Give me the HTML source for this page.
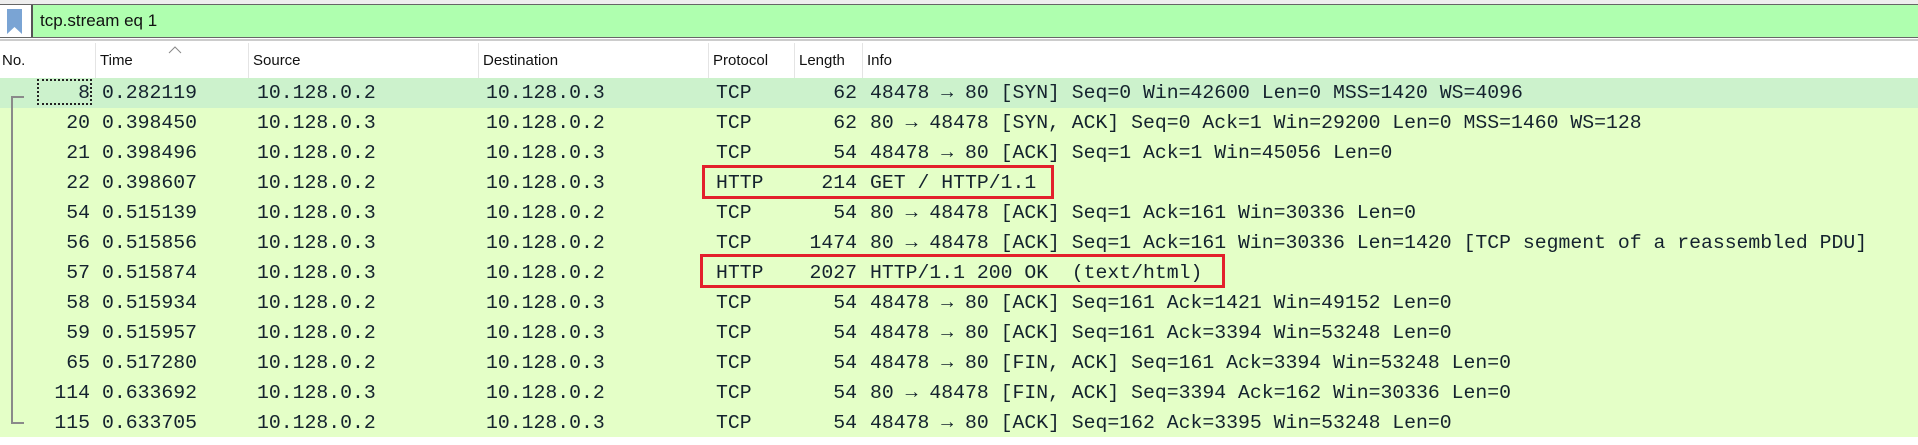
<!DOCTYPE html>
<html><head><meta charset="utf-8"><style>
body{margin:0;width:1918px;height:445px;background:#fff;position:relative;overflow:hidden;font-family:"Liberation Sans",sans-serif}
.abs{position:absolute}
.row{position:absolute;left:0;width:1918px;height:30px;background:#e4ffc7;font-family:"Liberation Mono",monospace;font-size:19.8px;color:#14222e;line-height:30px;white-space:pre}
.row.sel{background:#ccf2cc}
.row span{position:absolute;top:0}
.no{right:1828px;text-align:right}
.t{left:102px}.s{left:257px}.d{left:486px}.p{left:716px}
.l{right:1061px;text-align:right}
.i{left:870px}
.hd{position:absolute;top:43px;height:35px;line-height:35px;font-size:15px;color:#111;border-right:1px solid #e4e4e4;box-sizing:border-box;padding-left:4px}
</style></head><body>
<div class="abs" style="left:0;top:0;width:1918px;height:4px;background:#eee"></div>
<div class="abs" style="left:0;top:4px;width:1918px;height:1px;background:#666"></div>
<div class="abs" style="left:0;top:5px;width:31px;height:32px;background:#fff"></div>
<svg class="abs" style="left:6px;top:8px" width="17" height="27" viewBox="0 0 17 27"><path d="M1 1H16V26L8.5 19L1 26Z" fill="#7aa4d4"/></svg>
<div class="abs" style="left:31px;top:5px;width:2px;height:32px;background:#555"></div>
<div class="abs" style="left:33px;top:5px;width:1885px;height:32px;background:#afffaf"></div>
<div class="abs" style="left:40px;top:5px;height:32px;line-height:32px;font-size:17px;color:#111">tcp.stream eq 1</div>
<div class="abs" style="left:0;top:37px;width:1918px;height:1px;background:#666"></div>
<div class="abs" style="left:0;top:39px;width:1918px;height:2px;background:#ccc"></div>
<div class="hd" style="left:0;width:96px;padding-left:2px">No.</div>
<div class="hd" style="left:96px;width:153px">Time</div>
<div class="hd" style="left:249px;width:230px">Source</div>
<div class="hd" style="left:479px;width:230px">Destination</div>
<div class="hd" style="left:709px;width:86px">Protocol</div>
<div class="hd" style="left:795px;width:68px">Length</div>
<div class="hd" style="left:863px;width:1055px;border:none">Info</div>
<svg class="abs" style="left:168px;top:46px" width="14" height="8"><path d="M1 7L7 1L13 7" fill="none" stroke="#888" stroke-width="1"/></svg>

<div class="row sel" style="top:78px"><span class="no">8</span><span class="t">0.282119</span><span class="s">10.128.0.2</span><span class="d">10.128.0.3</span><span class="p">TCP</span><span class="l">62</span><span class="i">48478 → 80 [SYN] Seq=0 Win=42600 Len=0 MSS=1420 WS=4096</span></div>
<div class="row" style="top:108px"><span class="no">20</span><span class="t">0.398450</span><span class="s">10.128.0.3</span><span class="d">10.128.0.2</span><span class="p">TCP</span><span class="l">62</span><span class="i">80 → 48478 [SYN, ACK] Seq=0 Ack=1 Win=29200 Len=0 MSS=1460 WS=128</span></div>
<div class="row" style="top:138px"><span class="no">21</span><span class="t">0.398496</span><span class="s">10.128.0.2</span><span class="d">10.128.0.3</span><span class="p">TCP</span><span class="l">54</span><span class="i">48478 → 80 [ACK] Seq=1 Ack=1 Win=45056 Len=0</span></div>
<div class="row" style="top:168px"><span class="no">22</span><span class="t">0.398607</span><span class="s">10.128.0.2</span><span class="d">10.128.0.3</span><span class="p">HTTP</span><span class="l">214</span><span class="i">GET / HTTP/1.1</span></div>
<div class="row" style="top:198px"><span class="no">54</span><span class="t">0.515139</span><span class="s">10.128.0.3</span><span class="d">10.128.0.2</span><span class="p">TCP</span><span class="l">54</span><span class="i">80 → 48478 [ACK] Seq=1 Ack=161 Win=30336 Len=0</span></div>
<div class="row" style="top:228px"><span class="no">56</span><span class="t">0.515856</span><span class="s">10.128.0.3</span><span class="d">10.128.0.2</span><span class="p">TCP</span><span class="l">1474</span><span class="i">80 → 48478 [ACK] Seq=1 Ack=161 Win=30336 Len=1420 [TCP segment of a reassembled PDU]</span></div>
<div class="row" style="top:258px"><span class="no">57</span><span class="t">0.515874</span><span class="s">10.128.0.3</span><span class="d">10.128.0.2</span><span class="p">HTTP</span><span class="l">2027</span><span class="i">HTTP/1.1 200 OK  (text/html)</span></div>
<div class="row" style="top:288px"><span class="no">58</span><span class="t">0.515934</span><span class="s">10.128.0.2</span><span class="d">10.128.0.3</span><span class="p">TCP</span><span class="l">54</span><span class="i">48478 → 80 [ACK] Seq=161 Ack=1421 Win=49152 Len=0</span></div>
<div class="row" style="top:318px"><span class="no">59</span><span class="t">0.515957</span><span class="s">10.128.0.2</span><span class="d">10.128.0.3</span><span class="p">TCP</span><span class="l">54</span><span class="i">48478 → 80 [ACK] Seq=161 Ack=3394 Win=53248 Len=0</span></div>
<div class="row" style="top:348px"><span class="no">65</span><span class="t">0.517280</span><span class="s">10.128.0.2</span><span class="d">10.128.0.3</span><span class="p">TCP</span><span class="l">54</span><span class="i">48478 → 80 [FIN, ACK] Seq=161 Ack=3394 Win=53248 Len=0</span></div>
<div class="row" style="top:378px"><span class="no">114</span><span class="t">0.633692</span><span class="s">10.128.0.3</span><span class="d">10.128.0.2</span><span class="p">TCP</span><span class="l">54</span><span class="i">80 → 48478 [FIN, ACK] Seq=3394 Ack=162 Win=30336 Len=0</span></div>
<div class="row" style="top:408px;height:29px"><span class="no">115</span><span class="t">0.633705</span><span class="s">10.128.0.2</span><span class="d">10.128.0.3</span><span class="p">TCP</span><span class="l">54</span><span class="i">48478 → 80 [ACK] Seq=162 Ack=3395 Win=53248 Len=0</span></div>

<div class="abs" style="left:11px;top:96px;width:2px;height:328px;background:#8a8a8a"></div>
<div class="abs" style="left:11px;top:96px;width:13px;height:2px;background:#8a8a8a"></div>
<div class="abs" style="left:11px;top:422px;width:13px;height:2px;background:#8a8a8a"></div>
<div class="abs" style="left:37px;top:79px;width:55px;height:26px;border:2px dotted #222;box-sizing:border-box"></div>

<div class="abs" style="left:702px;top:165px;width:352px;height:34px;border:3px solid #e3202c;box-sizing:border-box"></div>
<div class="abs" style="left:700px;top:254px;width:525px;height:34px;border:3px solid #e3202c;box-sizing:border-box"></div>
</body></html>
